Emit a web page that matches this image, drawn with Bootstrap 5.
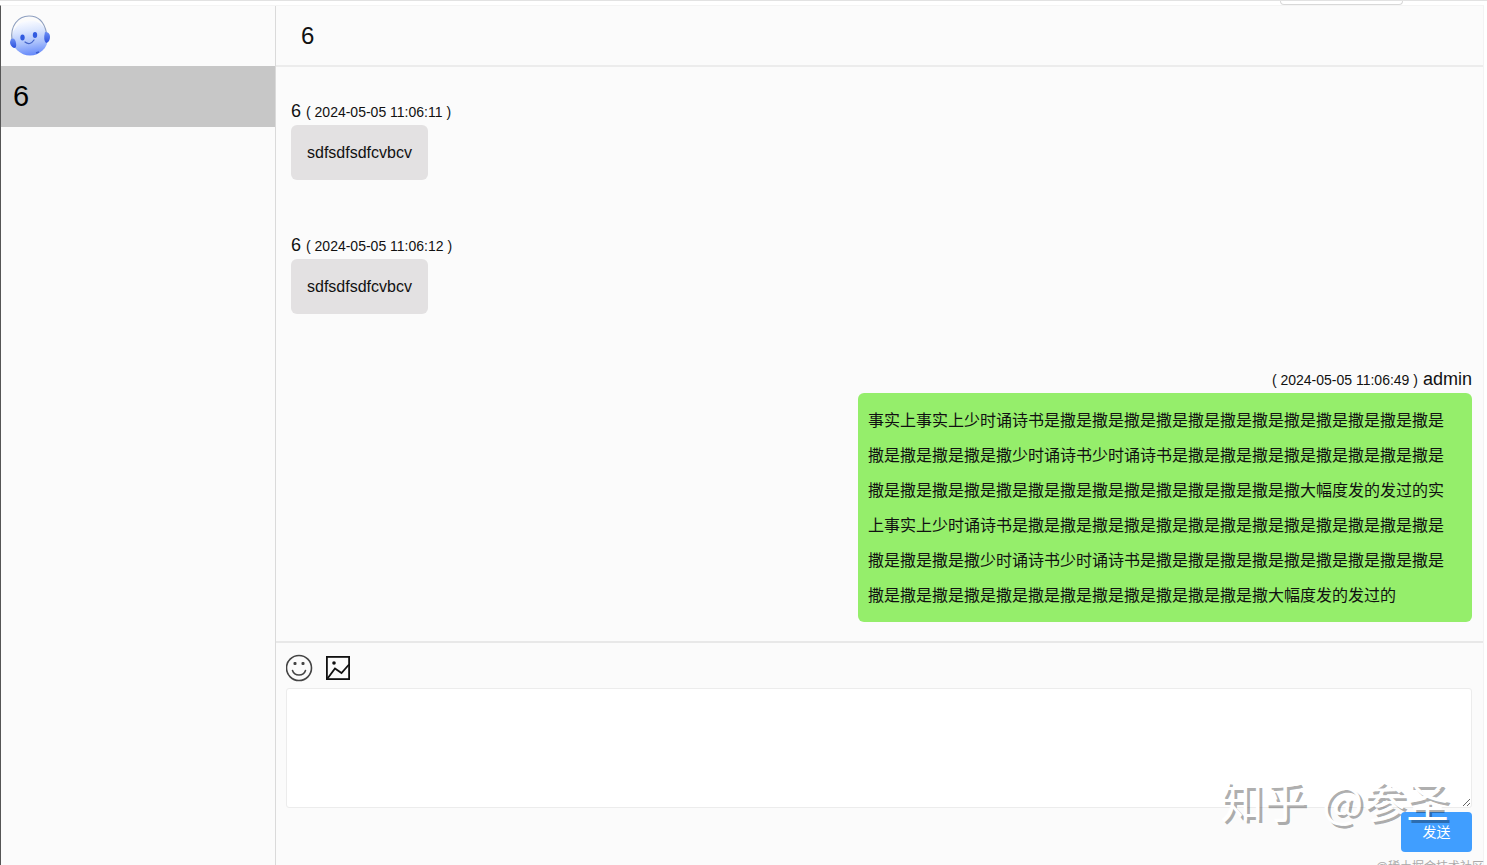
<!DOCTYPE html>
<html lang="zh-CN">
<head>
<meta charset="utf-8">
<meta name="viewport" content="width=device-width, initial-scale=1">
<title>Chat</title>
<link href="https://cdn.jsdelivr.net/npm/bootstrap@5.3.0/dist/css/bootstrap.min.css" rel="stylesheet">
<style>
body { font-family: "Liberation Sans", "Noto Sans CJK SC", sans-serif; color: #111; background: #fff; }
.window-top { height: 5px; border-top: 1px solid #e2e2e2; padding-right: 84px; }
.tab-edge { width: 123px; border: 1px solid #d8d8d8; border-top: 0; border-radius: 0 0 4px 4px; }
.shell { background: #fbfbfb; border-left: 1px solid #555; border-right: 1px solid #f3f3f3; border-top: 1px solid #f4f4f4; margin-right: 3px; }
.sidebar { flex: 0 0 275px; border-right: 1px solid #dadada; }
.top-row { height: 60px; }
.chat-title { height: 61px; font-size: 24px; line-height: 30px; border-bottom: 2px solid #ececec; padding-left: 25px; }
.contact { height: 61px; background: #c7c7c7; color: #000; font-size: 29px; padding-left: 12px; }
.messages { padding: 30px 11px 19px 15px; }
.msg { margin-bottom: 51px; }
.msg:last-child { margin-bottom: 0; }
.meta { font-size: 18px; line-height: 28px; }
.meta time { font-size: 14px; line-height: 14px; }
.bubble { font-size: 16px; border-radius: 6px; line-height: 35px; background: #e3e1e2; padding: 10px 16px; }
.bubble-own { background: #95ee6b; padding: 10px 14px 9px 10px; max-width: 614px; }
.composer { border-top: 2px solid #e8e8e8; padding: 11px 11px 13px 10px; }
.tools { margin-bottom: 6px; }
.tool { width: 28px; height: 28px; }
.entry { height: 120px; border: 1px solid #ececec; border-radius: 3px; resize: vertical; background: #fff; }
.send { width: 71px; height: 40px; background: #409eff; color: #fff; font-size: 14px; border-radius: 4px; }
.send:hover { background: #66b1ff; color: #fff; }
.sign { right: 38px; bottom: 36px; gap: 16px; font-family: "Noto Sans CJK SC", sans-serif; font-size: 43px; line-height: 60px; color: #fff; text-shadow: 3px 3px 0 rgba(0, 0, 0, .33); pointer-events: none; white-space: nowrap; }
.source { right: 3px; bottom: -10px; font-size: 12px; line-height: 16px; color: #aaa; pointer-events: none; }
</style>
</head>
<body>
<div class="vh-100 d-flex flex-column position-relative overflow-hidden">
  <div class="window-top d-flex justify-content-end flex-shrink-0"><div class="tab-edge"></div></div>
  <div class="shell d-flex flex-grow-1">
    <aside class="sidebar">
      <div class="top-row d-flex align-items-center ps-2">
        <svg width="42" height="42" viewBox="0 0 42 42" role="img" aria-label="avatar">
          <defs>
            <linearGradient id="face" x1="0.4" y1="0" x2="0.55" y2="1">
              <stop offset="0" stop-color="#fbfcff"/><stop offset=".3" stop-color="#dbe6fe"/><stop offset=".65" stop-color="#a9c0fb"/><stop offset="1" stop-color="#6488fa"/>
            </linearGradient>
            <linearGradient id="ear" x1="0" y1="0" x2="0" y2="1"><stop offset="0" stop-color="#6c8ff5"/><stop offset="1" stop-color="#2c50dc"/></linearGradient>
          </defs>
          <ellipse cx="21" cy="23" rx="18" ry="17.500" fill="url(#face)"/>
          <path d="M3 25C1 11 9 1 20 1C30 1 35.500 8 37.500 18" fill="none" stroke="#8fa0c0" stroke-width="1.200"/>
          <path d="M2 24Q6 22 7 28Q8 33 5 33Q1 31 1 27Z" fill="url(#ear)"/>
          <path d="M36 17Q41 17 41 22Q41 27 37 28Q34 25 36 17Z" fill="url(#ear)"/>
          <ellipse cx="13.500" cy="22.500" rx="2.200" ry="2.900" fill="#315be0"/>
          <ellipse cx="26" cy="20" rx="2.200" ry="2.900" fill="#315be0"/>
          <path d="M16 27Q21 31 25 25" fill="none" stroke="#4565c8" stroke-width="1.200" stroke-linecap="round"/>
          <path d="M27 38l3-1" stroke="#3d5fd0" stroke-width="1.500"/>
        </svg>
      </div>
      <div class="contact d-flex align-items-center">6</div>
    </aside>
    <main class="d-flex flex-column flex-grow-1">
      <header class="chat-title d-flex align-items-center">6</header>
      <section class="messages flex-grow-1">
        <article class="msg d-flex flex-column align-items-start">
          <div class="meta">6 <time>( 2024-05-05 11:06:11 )</time></div>
          <div class="bubble">sdfsdfsdfcvbcv</div>
        </article>
        <article class="msg d-flex flex-column align-items-start">
          <div class="meta">6 <time>( 2024-05-05 11:06:12 )</time></div>
          <div class="bubble">sdfsdfsdfcvbcv</div>
        </article>
        <article class="msg d-flex flex-column align-items-end">
          <div class="meta"><time>( 2024-05-05 11:06:49 )</time> admin</div>
          <div class="bubble bubble-own">事实上事实上少时诵诗书是撒是撒是撒是撒是撒是撒是撒是撒是撒是撒是撒是撒是<wbr>撒是撒是撒是撒是撒少时诵诗书少时诵诗书是撒是撒是撒是撒是撒是撒是撒是撒是<wbr>撒是撒是撒是撒是撒是撒是撒是撒是撒是撒是撒是撒是撒是撒大幅度发的发过的实<wbr>上事实上少时诵诗书是撒是撒是撒是撒是撒是撒是撒是撒是撒是撒是撒是撒是撒是<wbr>撒是撒是撒是撒少时诵诗书少时诵诗书是撒是撒是撒是撒是撒是撒是撒是撒是撒是<wbr>撒是撒是撒是撒是撒是撒是撒是撒是撒是撒是撒是撒是撒大幅度发的发过的</div>
        </article>
      </section>
      <form class="composer">
        <div class="tools d-flex gap-2">
          <button type="button" class="tool btn p-0 border-0 d-flex" aria-label="表情">
            <svg width="28" height="28" viewBox="0 0 28 28" fill="none" stroke="#444" stroke-width="1.600"><circle cx="13" cy="14" r="12.500"/><path d="M6.500 16.500Q8 21 13 21T19.500 16.500" stroke-linecap="round"/><g fill="#444" stroke="none"><rect x="7.500" y="8" width="3" height="3" rx="1"/><rect x="15.500" y="8" width="3" height="3" rx="1"/></g></svg>
          </button>
          <button type="button" class="tool btn p-0 border-0 d-flex" aria-label="图片">
            <svg width="28" height="28" viewBox="0 0 28 28" fill="none" stroke="#111" stroke-width="1.800"><rect x="4.900" y="2.900" width="22.200" height="22.200"/><path d="M5.500 24.500L13 14.500L19.500 19L27 10.500"/><circle cx="12" cy="9" r="1.800" fill="#111" stroke="none"/></svg>
          </button>
        </div>
        <textarea class="entry d-block w-100" aria-label="消息"></textarea>
        <div class="d-flex justify-content-end pt-1"><button type="submit" class="send btn border-0 p-0">发送</button></div>
      </form>
    </main>
  </div>
  <div class="sign position-absolute d-flex"><span>知乎</span><span>@参圣</span></div>
  <div class="source position-absolute">@稀土掘金技术社区</div>
</div>
<script src="https://cdn.jsdelivr.net/npm/bootstrap@5.3.0/dist/js/bootstrap.bundle.min.js"></script>
</body>
</html>
